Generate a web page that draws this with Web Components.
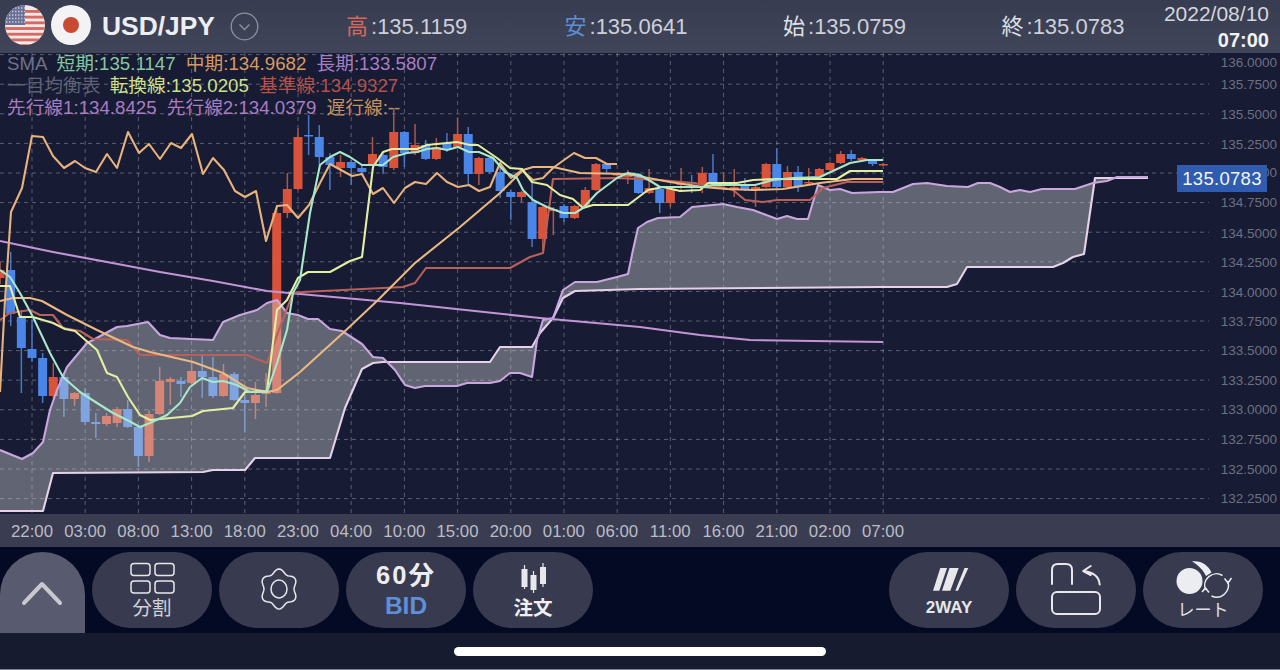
<!DOCTYPE html>
<html lang="ja">
<head>
<meta charset="utf-8">
<title>USD/JPY</title>
<style>
  html, body { margin: 0; height: 670px; overflow: hidden; background: #171b30; }
  body { font-family: "Liberation Sans", "Noto Sans CJK JP", sans-serif; }
</style>
</head>
<body>
<fx-app></fx-app>

<script>
// chart data, all values are in page pixels (the svg viewBox starts at y=53)
const slotX = k => 32 + 10.64 * k;

// k, wick top, body top, body bottom, wick bottom, colour
const CANDLES = [
  [-3,262,270,278,284,'r'],[-2,252,270,314,326,'b'],[-1,310,317,348,393,'b'],[0,320,349,358,362,'b'],
  [1,353,358,396,403,'b'],[2,363,377,396,398,'r'],[3,373,377,399,417,'b'],[4,392,393,399,406,'r'],
  [5,388,393,422,425,'b'],[6,413,422,424,438,'b'],[7,413,416,424,426,'r'],[8,407,409,423,427,'r'],
  [9,400,409,427,428,'b'],[10,426,427,456,467,'b'],[11,410,414,456,462,'r'],[12,367,381,414,415,'r'],
  [13,377,379,382,405,'r'],[14,377,381,384,397,'b'],[15,363,371,383,384,'r'],[16,356,371,377,398,'b'],
  [17,357,377,396,398,'b'],[18,364,374,396,397,'r'],[19,372,374,400,401,'b'],[20,390,400,403,432,'b'],
  [21,382,395,403,419,'r'],[22,373,392,394,407,'r'],[23,205,213,393,394,'r'],[24,173,189,213,218,'r'],
  [25,128,137,189,190,'r'],[26,115,135,136,155,'b'],[27,125,137,157,165,'b'],[28,153,157,165,190,'b'],
  [29,155,162,168,177,'r'],[30,160,162,168,185,'b'],[31,165,168,172,175,'b'],[32,137,154,165,166,'r'],
  [33,152,155,167,174,'b'],[34,108,132,168,170,'r'],[35,131,132,153,167,'b'],[36,124,145,153,155,'r'],
  [37,140,145,159,160,'b'],[38,138,147,159,160,'r'],[39,133,143,150,152,'b'],[40,118,134,147,148,'r'],
  [41,127,134,174,184,'b'],[42,157,158,174,185,'r'],[43,157,158,172,174,'b'],[44,163,172,191,198,'b'],
  [45,190,192,197,220,'b'],[46,191,192,197,202,'r'],[47,183,202,239,247,'b'],[48,206,207,239,250,'r'],
  [49,207,209,211,235,'r'],[50,204,206,218,222,'b'],[51,205,206,218,219,'r'],[52,187,190,206,207,'r'],
  [53,163,164,190,191,'r'],[54,163,164,169,173,'b'],[55,173,174,175,176,'r'],[56,170,175,177,184,'r'],
  [57,173,177,193,194,'b'],[58,169,188,193,194,'r'],[59,188,189,203,213,'b'],[60,188,189,203,207,'r'],
  [61,168,183,185,192,'r'],[62,175,182,184,193,'b'],[63,167,173,185,193,'r'],[64,154,173,185,186,'b'],
  [65,172,183,185,190,'r'],[66,169,187,189,197,'r'],[67,178,185,190,191,'b'],[68,186,187,189,207,'r'],
  [69,163,164,187,188,'r'],[70,148,164,187,188,'b'],[71,166,172,187,188,'r'],[72,166,172,187,192,'b'],
  [73,168,182,183,184,'r'],[74,168,169,176,177,'r'],[75,162,163,170,171,'r'],[76,151,154,163,164,'r'],
  [77,150,154,159,161,'b'],[78,157,158,160,161,'r'],[79,159,160,164,166,'b'],[80,163,164,165,166,'r']
];

const LINES = {
  smaLong: '0,241 53,252 107,262 160,272 213,281 267,291 300,294 400,303 540,318 640,327 700,335 750,340 883,342',
  lagging: '0,392 5,300 11,212 22,188 32,136 43,137 53,156 64,168 75,161 85,168 96,172 107,154 117,168 128,132 139,153 149,144 160,159 171,143 181,148 192,134 203,174 213,158 224,170 235,191 245,197 256,191 266,241 277,206 287,205 298,218 309,205 320,183 330,164 341,170 352,176 362,174 373,194 383,188 394,203 405,188 415,182 426,184 437,173 447,182 458,187 469,185 479,191 490,187 500,163 511,178 522,170 533,180 543,178 553,168 564,160 574,153 585,158 596,158 607,164 617,164',
  smaMid: '0,301 13,298 30,298 42,301 67,315 97,330 133,347 150,352 193,362 223,373 247,388 267,392 277,390 300,372 343,333 378,300 415,263 460,227 500,193 523,170 533,167 553,167 580,173 626,174 643,177 670,182 703,187 727,189 753,190 783,189 820,183 853,179 883,179',
  kijun: '0,320 10,313 30,310 40,315 53,315 63,328 80,331 93,339 127,340 140,355 247,355 267,363 280,327 293,293 303,292 403,287 415,283 426,268 510,268 530,257 543,253 553,179 617,178 660,180 693,183 720,187 733,190 745,200 763,202 777,200 810,200 823,188 847,182 883,182',
  tenkan: '0,286 10,286 20,317 33,317 53,323 65,329 75,331 97,350 107,373 117,377 128,397 140,415 150,420 192,416 203,411 233,408 245,392 267,391 277,310 287,300 298,278 308,272 330,272 350,261 362,257 373,167 383,152 392,149 417,149 427,145 457,142 470,145 478,145 497,158 510,168 522,169 532,182 547,185 560,195 573,199 583,208 593,205 628,205 648,190 663,187 680,191 700,190 708,183 737,183 753,180 777,179 837,179 850,171 883,171',
  smaShort: '0,270 10,277 20,293 33,317 50,353 63,377 80,392 97,403 113,413 127,420 140,427 150,423 167,415 180,403 190,387 202,378 213,382 223,381 237,385 250,392 267,392 277,363 287,330 293,293 300,280 310,213 320,165 330,157 340,152 350,157 362,165 373,165 383,165 393,157 407,153 417,152 427,149 437,148 447,150 458,147 469,152 479,152 493,158 505,172 517,178 523,190 533,200 547,207 563,213 575,213 583,208 597,193 617,178 628,173 640,175 652,182 660,187 680,187 703,187 713,185 740,185 755,185 773,180 793,178 820,177 850,163 867,160 883,160'
};

const CLOUD_A = '0,450 22,459 33,453 43,442 50,410 57,390 67,367 87,343 93,340 117,327 127,326 148,322 160,335 170,338 213,340 223,322 240,315 257,310 267,303 277,300 287,313 298,315 308,319 318,319 330,329 342,331 362,344 373,357 383,358 395,370 405,385 415,388 425,386 457,386 467,383 490,383 500,381 510,373 520,373 532,377 537,340 543,320 553,318 563,290 575,282 597,282 617,277 628,274 633,250 638,228 647,222 658,218 680,217 692,207 723,204 737,207 753,210 777,219 787,216 797,219 808,219 818,185 830,190 840,189 852,193 880,192 893,192 913,184 927,183 947,186 968,187 978,183 990,183 1000,187 1010,192 1020,190 1030,192 1042,189 1075,189 1093,183 1107,181 1117,177 1148,177';
const CLOUD_B = '0,511 43,511 53,473 203,472 213,470 245,470 255,458 330,458 345,408 362,369 373,363 383,362 490,362 500,347 532,347 540,333 553,318 563,298 575,291 640,289 880,287 947,287 957,284 967,267 1053,267 1063,263 1073,257 1084,254 1095,178 1148,178';

const PRICES = [
  ['136.0000',63],['135.7500',85],['135.5000',115],['135.2500',145],['135.0000',173],['134.7500',203],
  ['134.5000',234],['134.2500',263],['134.0000',293],['133.7500',322],['133.5000',351],['133.2500',381],
  ['133.0000',410],['132.7500',440],['132.5000',470],['132.2500',499]
];

const TIMES = ['22:00','03:00','08:00','13:00','18:00','23:00','04:00','10:00','15:00','20:00','01:00','06:00','11:00','16:00','21:00','02:00','07:00'];

class FxStat extends HTMLElement {
  constructor() {
    super();
    this.attachShadow({ mode: 'open' });
    this.shadowRoot.innerHTML = `
      <style>
        :host { display: block; width: 218.5px; font-size: 22px; line-height: 26px; color: #cdd0d8; white-space: nowrap; }
        b { font-weight: 400; color: var(--mark, #dfe0e6); margin-right: 3px; }
      </style>
      <b>${this.getAttribute('mark')}</b><slot></slot>
    `;
  }
}
customElements.define('fx-stat', FxStat);

class FxHeader extends HTMLElement {
  constructor() {
    super();
    this.attachShadow({ mode: 'open' });
    let stripes = '';
    for (let i = 0; i < 7; i++) stripes += `<rect x="0" y="${i * 5.7 + 5}" width="40" height="2.85" fill="#d9695e"/>`;
    this.shadowRoot.innerHTML = `
      <style>
        :host { display: flex; align-items: center; height: 53px; box-sizing: border-box; padding: 0 11px 0 5px;
                background: linear-gradient(#383c50, #41455a); }
        .pair { display: flex; align-items: center; width: 341px; flex: none; }
        .flag { width: 40px; height: 40px; flex: none; margin-bottom: 3px; }
        .jp { margin-left: 6px; }
        .name { margin-left: 11px; font-size: 26.4px; font-weight: 700; color: #eceef2; }
        .open { margin-left: 15px; width: 29px; height: 29px; }
        .date { margin-left: auto; text-align: right; color: #d4d6dc; font-size: 21px; line-height: 26px; }
        .date b { display: block; color: #f2f3f5; font-size: 20px; }
      </style>
      <div class="pair">
        <svg class="flag" viewBox="0 0 40 40">
          <clipPath id="us"><circle cx="20" cy="20" r="20"/></clipPath>
          <g clip-path="url(#us)">
            <rect width="40" height="40" fill="#efe9ea"/>
            ${stripes}
            <rect width="20" height="20" fill="#6a6f95"/>
            <path d="M1 3h19M1 6.5h19M1 10h19M1 13.500h19M1 17h19" stroke="#c5c8dc" stroke-width="1.300" stroke-dasharray="1.500 1.500"/>
          </g>
        </svg>
        <svg class="flag jp" viewBox="0 0 40 40">
          <circle cx="20" cy="20" r="20" fill="#f3f3f5"/>
          <circle cx="20" cy="20" r="8" fill="#c94a33"/>
        </svg>
        <span class="name">USD/JPY</span>
        <svg class="open" viewBox="0 0 29 29" fill="none" stroke="#8f919d" stroke-width="1.300">
          <circle cx="14.500" cy="14.500" r="13.300"/>
          <path d="M9.500 12.500l5 5 5-5"/>
        </svg>
      </div>
      <slot></slot>
      <div class="date">2022/08/10<b>07:00</b></div>
    `;
  }
}
customElements.define('fx-header', FxHeader);

class FxChart extends HTMLElement {
  constructor() {
    super();
    this.attachShadow({ mode: 'open' });

    let grid = '';
    for (let y = 54.6; y < 510; y += 29.6) grid += `<path d="M0 ${y}H1209"/>`;
    for (let i = 0; i < 17; i++) grid += `<path d="M${32 + 53.2 * i} 53V513"/>`;

    let candles = '';
    CANDLES.forEach(([k, wt, bt, bb, wb, c]) => {
      const x = slotX(k);
      const fill = c === 'r' ? '#d9523a' : '#4a86e8';
      const wick = c === 'r' ? '#a8594c' : '#4a78c4';
      candles += `<path d="M${x} ${wt}V${wb}" stroke="${wick}" stroke-width="1.500"/>`;
      candles += `<rect x="${x - 4.5}" y="${bt}" width="9" height="${Math.max(bb - bt, 1.5)}" fill="${fill}"/>`;
    });

    const reversedB = CLOUD_B.split(' ').reverse().join(' ');
    const line = (pts, color) => `<polyline points="${pts}" fill="none" stroke="${color}" stroke-width="2.100" stroke-linejoin="round"/>`;

    const prices = PRICES.map(([t, y]) => `<span class="price" style="top:${y - 53 - 9}px">${t}</span>`).join('');

    this.shadowRoot.innerHTML = `
      <style>
        :host { display: block; position: relative; height: 461px; background: #171b33; overflow: hidden; }
        svg { display: block; }
        .grid path { stroke: rgba(255, 255, 255, .3); stroke-width: 1; stroke-dasharray: 4 4; fill: none; }
        .price { position: absolute; right: 3px; font-size: 13.500px; line-height: 18px; color: #6d7081; }
        .now { position: absolute; left: 1177px; top: 112px; width: 90px; height: 27px; background: #2f5cae;
               color: #f4f6fa; font-size: 18.500px; line-height: 27px; text-align: center; letter-spacing: .3px; }
        .legend { position: absolute; left: 7px; top: 0; font-size: 18.700px; line-height: 22px; white-space: nowrap; }
        .legend span { margin-right: 5px; }
      </style>
      <svg width="1280" height="461" viewBox="0 53 1280 461">
        <g class="grid">${grid}</g>
        <g>${candles}</g>
        <polygon points="${CLOUD_A} ${reversedB}" fill="rgba(210, 210, 210, .4)"/>
        ${line(CLOUD_B, '#e6d2e8')}
        ${line(CLOUD_A, '#c9a6de')}
        ${line(LINES.smaLong, '#c394d8')}
        ${line(LINES.kijun, '#b9605a')}
        ${line(LINES.lagging, '#e8b27c')}
        ${line(LINES.smaMid, '#eab880')}
        ${line(LINES.tenkan, '#e2eea0')}
        ${line(LINES.smaShort, '#a8e8c8')}
      </svg>
      ${prices}
      <div class="now">135.0783</div>
      <div class="legend">
        <div><span style="color:#6f7288;margin-right:9px">SMA</span><span style="color:#86c9a0">短期:135.1147</span> <span style="color:#d89a5f">中期:134.9682</span> <span style="color:#a87fc4">長期:133.5807</span></div>
        <div><span style="color:#5f6275;margin-right:4px">一目均衡表</span> <span style="color:#cfe08a">転換線:135.0205</span> <span style="color:#b5524a">基準線:134.9327</span></div>
        <div><span style="color:#a97dc0">先行線1:134.8425</span> <span style="color:#a97dc0">先行線2:134.0379</span> <span style="color:#c5925e">遅行線:--</span></div>
      </div>
    `;
  }
}
customElements.define('fx-chart', FxChart);

class FxTimeAxis extends HTMLElement {
  constructor() {
    super();
    this.attachShadow({ mode: 'open' });
    this.shadowRoot.innerHTML = `
      <style>
        :host { display: grid; grid-auto-flow: column; grid-auto-columns: 53.2px; justify-content: start; align-items: center;
                height: 31px; padding: 2px 0 0 5.400px; background: #3a3d51; color: #babcc6; font-size: 16.800px; }
        span { text-align: center; }
      </style>
      ${TIMES.map(t => `<span>${t}</span>`).join('')}
    `;
  }
}
customElements.define('fx-time-axis', FxTimeAxis);

class FxPill extends HTMLElement {
  constructor() {
    super();
    this.attachShadow({ mode: 'open' });
    this.shadowRoot.innerHTML = `
      <style>
        :host { display: flex; flex-direction: column; align-items: center; justify-content: center; flex: none;
                width: 120px; height: 76px; border-radius: 38px; background: #383b50; color: #e6e7eb; }
      </style>
      <slot></slot>
    `;
  }
}
customElements.define('fx-pill', FxPill);

class FxToolbar extends HTMLElement {
  constructor() {
    super();
    this.attachShadow({ mode: 'open' });
    this.shadowRoot.innerHTML = `
      <style>
        :host { display: flex; align-items: flex-start; height: 86px; box-sizing: border-box; padding: 5px 17px 0 0;
                background: #050a24; gap: 7px; }
        .tab { width: 85px; height: 81px; flex: none; border-radius: 43px 43px 0 0; background: #585b70;
               display: flex; justify-content: center; }
        .tab svg { margin-top: 28px; margin-left: -2px; }
        .gap { flex: 1; }
      </style>
      <div class="tab">
        <svg width="44" height="26" viewBox="0 0 44 26" fill="none" stroke="#c9c9cd" stroke-width="4" stroke-linecap="round" stroke-linejoin="round">
          <path d="M4 23L22 4l18 19"/>
        </svg>
      </div>
      <slot name="left"></slot>
      <div class="gap"></div>
      <slot name="right"></slot>
    `;
  }
}
customElements.define('fx-toolbar', FxToolbar);

class FxFoot extends HTMLElement {
  constructor() {
    super();
    this.attachShadow({ mode: 'open' });
    this.shadowRoot.innerHTML = `
      <style>
        :host { display: flex; justify-content: center; height: 37px; box-sizing: border-box; padding-top: 14px;
                background: #171b30; border-bottom: 1px solid #7f8398; }
        i { display: block; width: 372px; height: 9px; border-radius: 5px; background: #fff; }
      </style>
      <i></i>
    `;
  }
}
customElements.define('fx-foot', FxFoot);

// gear outline for the settings button
function gearPath(cx, cy, r, wave) {
  const pts = [];
  for (let a = 0; a < 360; a += 5) {
    const t = a * Math.PI / 180;
    const rr = r + wave * Math.cos(6 * t);
    pts.push(`${(cx + rr * Math.sin(t) * .94).toFixed(1)} ${(cy - rr * Math.cos(t)).toFixed(1)}`);
  }
  return 'M' + pts.join('L') + 'Z';
}

class FxApp extends HTMLElement {
  constructor() {
    super();
    this.attachShadow({ mode: 'open' });
    this.shadowRoot.innerHTML = `
      <style>
        :host { display: block; width: 1280px; height: 670px; font-family: "Liberation Sans", "Noto Sans CJK JP", sans-serif; }
        .label { font-size: 19.500px; line-height: 22px; margin-top: 3px; }
        .bold { font-weight: 700; }
        .tf { font-size: 25.500px; line-height: 28px; font-weight: 700; color: #eeeef2; letter-spacing: 2px; }
        .bid { font-size: 24.500px; line-height: 28px; font-weight: 700; color: #5f8fd8; margin-top: 3px; }
        .way { font-size: 17px; line-height: 20px; font-weight: 700; margin-top: 7px; }
        svg { display: block; }
      </style>
      <fx-header>
        <fx-stat mark="高" style="--mark:#d9675a">:135.1159</fx-stat>
        <fx-stat mark="安" style="--mark:#5b8fd6">:135.0641</fx-stat>
        <fx-stat mark="始">:135.0759</fx-stat>
        <fx-stat mark="終" style="width:150px">:135.0783</fx-stat>
      </fx-header>
      <fx-chart></fx-chart>
      <fx-time-axis></fx-time-axis>
      <fx-toolbar>
        <fx-pill slot="left">
          <svg width="48" height="32" viewBox="128 562 48 32" fill="none" stroke="#e6e7eb" stroke-width="1.500">
            <rect x="131" y="563.500" width="19" height="12" rx="3"/><rect x="155" y="563.500" width="19" height="12" rx="3"/>
            <rect x="131" y="581" width="19" height="12" rx="3"/><rect x="155" y="581" width="19" height="12" rx="3"/>
          </svg>
          <span class="label" style="color:#d2d3d9">分割</span>
        </fx-pill>
        <fx-pill slot="left">
          <svg width="44" height="44" viewBox="-22 -22 44 44" fill="none" stroke="#e6e7eb" stroke-width="1.500" style="margin-top:-2px">
            <path d="${gearPath(0, 0, 18, 2)}"/>
            <ellipse cx="0" cy="0" rx="8" ry="9"/>
          </svg>
        </fx-pill>
        <fx-pill slot="left">
          <span class="tf">60分</span>
          <span class="bid">BID</span>
        </fx-pill>
        <fx-pill slot="left">
          <svg width="30" height="32" viewBox="518 562 30 32" fill="#e8e8ec" stroke="#e8e8ec" stroke-width="1.200">
            <path d="M524.500 565V589M533.500 571V593M543 563V587" fill="none"/>
            <rect x="521.500" y="569" width="6" height="18" stroke="none"/>
            <rect x="530.500" y="575" width="6" height="15" stroke="none"/>
            <rect x="540" y="567" width="6" height="17" stroke="none"/>
          </svg>
          <span class="label bold" style="color:#f0f0f3">注文</span>
        </fx-pill>
        <fx-pill slot="right">
          <svg width="40" height="29" viewBox="928 562 40 29" fill="#e8e8ec">
            <polygon points="939.300,568 946,568 938.300,590.700 932,590.700"/>
            <polygon points="948.500,568 957.700,568 949.300,590.700 941,590.700"/>
            <polygon points="963.500,568 967.300,568 957,590.700 954.300,590.700"/>
          </svg>
          <span class="way">2WAY</span>
        </fx-pill>
        <fx-pill slot="right">
          <svg width="54" height="54" viewBox="1050 563 54 54" fill="none" stroke="#e8e8ec" stroke-width="2" stroke-linecap="round" stroke-linejoin="round">
            <path d="M1053 584V570q0-6 6-6h8q6 0 6 6V584"/>
            <rect x="1053" y="592" width="48" height="22" rx="5"/>
            <path d="M1100.700 584.500q-1-11.500-15.700-13.500M1091.700 566l-7.500 5 7.500 4"/>
          </svg>
        </fx-pill>
        <fx-pill slot="right">
          <svg width="60" height="42" viewBox="1172 559 60 42">
            <circle cx="1188.500" cy="581" r="13" fill="#ecedf0"/>
            <path d="M1191 561.500c8-1.500 16 3 19.500 11l-5.500 3.500c-3-6.500-8-11-14-14.500z" fill="#ecedf0"/>
            <path d="M1204.500 590a11.800 11.800 0 0 1 17-14.500M1226.500 581a11.800 11.800 0 0 1-16 15" fill="none" stroke="#ecedf0" stroke-width="1.500"/>
            <path d="M1223.500 578.500l3.500 4.500 3.500-5M1201 592l3.500-4 3.500 4.500" fill="none" stroke="#ecedf0" stroke-width="1.500"/>
          </svg>
          <span class="label" style="font-size:17px;color:#dfe0e4;line-height:20px;margin-top:0">レート</span>
        </fx-pill>
      </fx-toolbar>
      <fx-foot></fx-foot>
    `;
  }
}
customElements.define('fx-app', FxApp);
</script>
</body>
</html>
